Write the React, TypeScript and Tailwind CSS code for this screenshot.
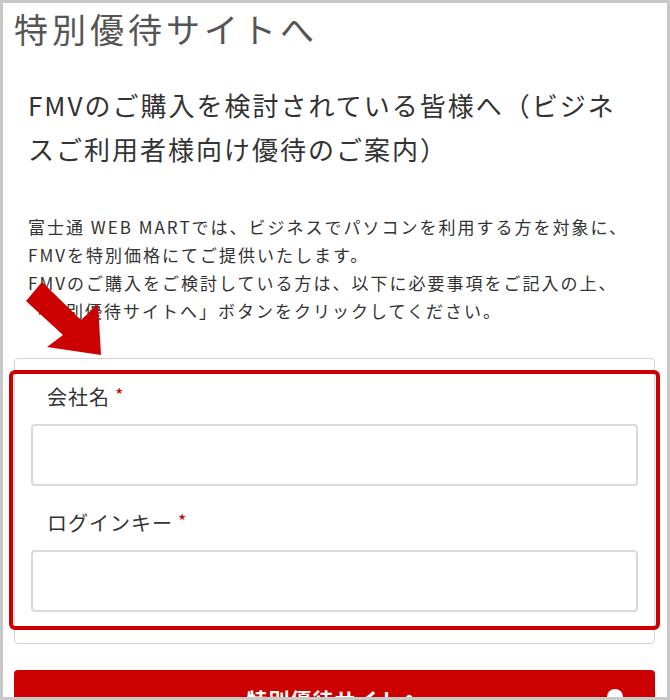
import React from "react";

function Arrow() {
  // red pointer drawn over the intro text, in page coordinates
  return (
    <svg
      className="absolute left-[17px] top-[275px] pointer-events-none"
      width="86"
      height="82"
      viewBox="20 278 86 82"
    >
      <polygon
        points="26,301 42,282 81,320 98,304 101,355 47,347 63,335"
        fill="#cc0000"
      />
    </svg>
  );
}

function Field({ label }: { label: string }) {
  return (
    <div className="flex flex-col gap-[13px]">
      <div className="flex items-start gap-[5px] pl-4 text-[20px] leading-[28px] tracking-[1px] text-[#333]">
        <span>{label}</span>
        <span className="text-[18px] leading-[22px] text-[#cc0000]">*</span>
      </div>
      <input
        type="text"
        className="h-[62px] w-full rounded-[4px] border-2 border-[#dadada] bg-white px-3 outline-none"
      />
    </div>
  );
}

export default function App() {
  return (
    <div className="relative flex h-[700px] w-[670px] flex-col overflow-hidden border-[3px] border-[#c8c8c8] bg-white pl-[11px] pr-[12px] pt-[6px] font-['Noto_Sans_CJK_JP','Noto_Sans',sans-serif]">
      <h1 className="text-[34px] leading-[40px] tracking-[4px] font-normal text-[#555]">
        特別優待サイトへ
      </h1>

      <h2 className="mt-[34px] pl-[14px] whitespace-nowrap text-[26px] leading-[44px] tracking-[2px] font-normal text-[#333]">
        FMVのご購入を検討されている皆様へ（ビジネ
        <br />
        スご利用者様向け優待のご案内）
      </h2>

      <p className="mt-[42px] pl-[14px] whitespace-nowrap text-[17px] leading-[28px] tracking-[2px] text-[#333]">
        富士通 WEB MARTでは、ビジネスでパソコンを利用する方を対象に、
        <br />
        FMVを特別価格にてご提供いたします。
        <br />
        FMVのご購入をご検討している方は、以下に必要事項をご記入の上、
        <br />
        「特別優待サイトへ」ボタンをクリックしてください。
      </p>

      {/* Form */}
      <div className="mt-[33px] flex flex-col gap-[23px] rounded-[4px] border border-[#d4d4d4] px-4 pt-[24px] pb-[31px]">
        <Field label="会社名" />
        <Field label="ログインキー" />
      </div>

      <button
        type="button"
        className="mt-[26px] flex h-[60px] shrink-0 items-center rounded-[4px] bg-[#cc0000] pr-[32px] text-[21px] font-bold tracking-[1px] text-white"
      >
        <span className="flex-1 pl-[48px] text-center">特別優待サイトへ</span>
        <span className="mb-[6px] h-[16px] w-[16px] rounded-full bg-white" />
      </button>

      {/* Highlight frame */}
      <div className="pointer-events-none absolute left-[6px] top-[367px] h-[260px] w-[651px] rounded-[6px] border-4 border-[#cc0000]" />
      <Arrow />
    </div>
  );
}
